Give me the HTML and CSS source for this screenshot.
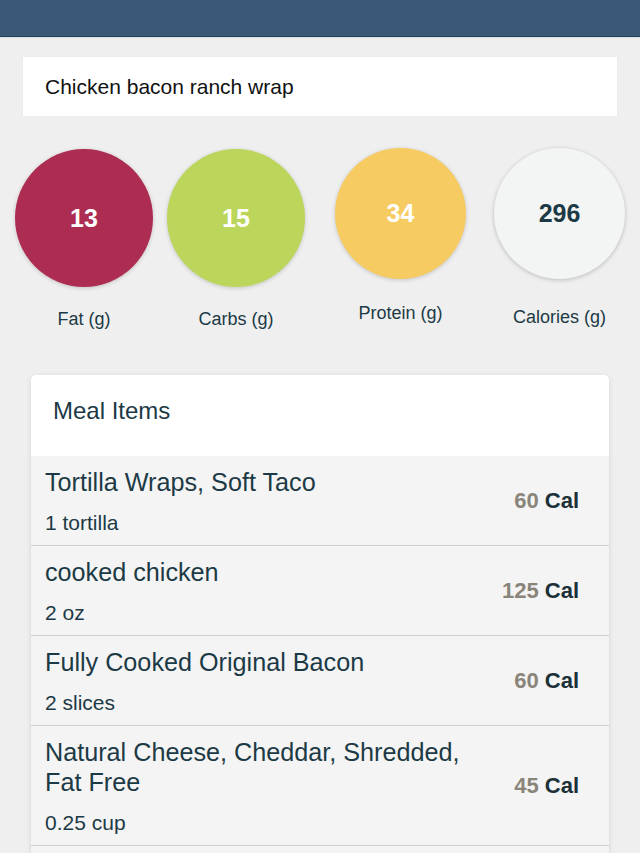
FILE: index.html
```html
<!DOCTYPE html>
<html>
<head>
<meta charset="utf-8">
<link rel="stylesheet" href="styles.css">
</head>
<body>
<header class="topbar"></header>
<main class="page">
  <div class="search">Chicken bacon ranch wrap</div>
  <section class="macros">
    <div class="macro macro-fat">
      <div class="circle">13</div>
      <div class="label">Fat (g)</div>
    </div>
    <div class="macro macro-carbs">
      <div class="circle">15</div>
      <div class="label">Carbs (g)</div>
    </div>
    <div class="macro macro-protein">
      <div class="circle">34</div>
      <div class="label">Protein (g)</div>
    </div>
    <div class="macro macro-cal">
      <div class="circle">296</div>
      <div class="label">Calories (g)</div>
    </div>
  </section>
  <section class="card">
    <div class="card-head">Meal Items</div>
    <div class="item">
      <div class="item-info">
        <div class="item-name">Tortilla Wraps, Soft Taco</div>
        <div class="item-serving">1 tortilla</div>
      </div>
      <div class="item-cal"><span class="num">60</span> Cal</div>
    </div>
    <div class="item">
      <div class="item-info">
        <div class="item-name">cooked chicken</div>
        <div class="item-serving">2 oz</div>
      </div>
      <div class="item-cal"><span class="num">125</span> Cal</div>
    </div>
    <div class="item">
      <div class="item-info">
        <div class="item-name">Fully Cooked Original Bacon</div>
        <div class="item-serving">2 slices</div>
      </div>
      <div class="item-cal"><span class="num">60</span> Cal</div>
    </div>
    <div class="item">
      <div class="item-info">
        <div class="item-name">Natural Cheese, Cheddar, Shredded,<br>Fat Free</div>
        <div class="item-serving">0.25 cup</div>
      </div>
      <div class="item-cal"><span class="num">45</span> Cal</div>
    </div>
    <div class="item item-more"></div>
  </section>
</main>
</body>
</html>
```
FILE: styles.css
```css
html, body {
  margin: 0;
  padding: 0;
}
body {
  background: #efefef;
  font-family: "Liberation Sans", Arial, Helvetica, sans-serif;
  color: #1c3a45;
  width: 640px;
  height: 853px;
  overflow: hidden;
}
.topbar {
  height: 36px;
  background: #3b5878;
  border-bottom: 1px solid #2b3f57;
  box-shadow: 0 1px 0 #cfe3e3;
}
.page {
  padding-top: 20px;
}
.search {
  margin: 0 23px;
  height: 59px;
  box-sizing: border-box;
  background: #ffffff;
  padding: 0 22px;
  display: flex;
  align-items: center;
  font-size: 21px;
  color: #111111;
  box-shadow: 0 0 2px rgba(0,0,0,0.04);
}
.macros {
  display: flex;
  align-items: flex-start;
  padding-left: 15px;
  margin-top: 33px;
}
.macro {
  display: flex;
  flex-direction: column;
  align-items: center;
}
.circle {
  border-radius: 50%;
  display: flex;
  align-items: center;
  justify-content: center;
  font-weight: bold;
  font-size: 25px;
  color: #ffffff;
  box-shadow: 0 1px 4px rgba(0,0,0,0.18);
}
.label {
  font-size: 18px;
  line-height: 20px;
  color: #1c3a45;
  white-space: nowrap;
}
.macro-fat .circle,
.macro-carbs .circle {
  width: 138px;
  height: 138px;
}
.macro-fat .circle { background: #ad2c52; }
.macro-carbs { margin-left: 14px; }
.macro-carbs .circle { background: #bcd65b; }
.macro-fat .label,
.macro-carbs .label { margin-top: 22px; }
.macro-protein { margin-left: 30px; margin-top: -1px; }
.macro-protein .circle {
  width: 131px;
  height: 131px;
  background: #f6cc62;
}
.macro-protein .label { margin-top: 24px; }
.macro-cal { margin-left: 28px; margin-top: -1px; }
.macro-cal .circle {
  width: 131px;
  height: 131px;
  background: #f3f4f4;
  color: #1c3a45;
  box-shadow: 0 1px 4px rgba(0,0,0,0.22);
}
.macro-cal .label { margin-top: 28px; }
.card {
  margin: 46px 31px 0 31px;
  background: #ffffff;
  border-radius: 5px;
  box-shadow: 0 1px 5px rgba(0,0,0,0.12);
  overflow: hidden;
}
.card-head {
  font-size: 24px;
  line-height: 26px;
  padding: 23px 22px 32px 22px;
  color: #1c3a45;
}
.item {
  display: flex;
  align-items: center;
  justify-content: space-between;
  background: #f4f4f4;
  border-bottom: 1px solid #cfcfcf;
  padding: 11px 30px 10px 14px;
}
.item-more {
  height: 60px;
  border-bottom: none;
}
.item-name {
  font-size: 25.2px;
  line-height: 30px;
  color: #1c3a45;
}
.item-serving {
  font-size: 21px;
  line-height: 24px;
  margin-top: 14px;
  color: #1c3a45;
}
.item-cal {
  font-size: 22px;
  font-weight: bold;
  color: #1c3038;
  white-space: nowrap;
}
.item-cal .num {
  color: #8a857a;
}
```
